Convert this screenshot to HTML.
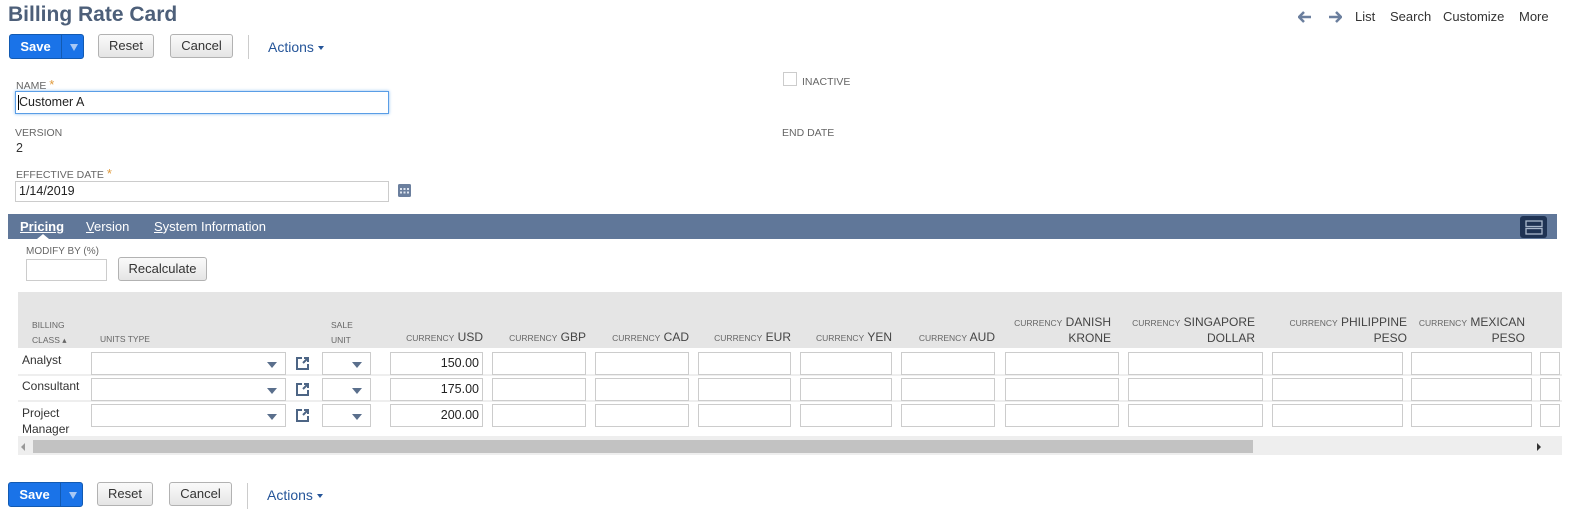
<!DOCTYPE html>
<html><head><meta charset="utf-8"><style>
*{box-sizing:border-box;margin:0;padding:0}
body{width:1583px;height:520px;background:#fff;font-family:"Liberation Sans",sans-serif;color:#333;position:relative;overflow:hidden;font-size:12px}
.a{position:absolute}
.lbl{position:absolute;font-size:10.5px;color:#666;text-transform:uppercase}
.star{color:#e09a3c;font-size:13px}
.btn{position:absolute;height:24px;border:1px solid #b2b2b2;border-radius:3px;background:linear-gradient(#fafafa,#e5e5e5);font-size:13px;color:#333;text-align:center;line-height:22px}
.save{position:absolute;height:25px;width:75px;border:1px solid #125ab2;border-radius:3px;background:#1a73e8;color:#fff;font-weight:bold;font-size:13px;line-height:23px}
.save span{position:absolute;left:0;width:51px;text-align:center}
.save i{position:absolute;left:51px;top:0;bottom:0;width:1px;background:#125ab2}
.save b{position:absolute;left:60px;top:9px;border-left:4px solid transparent;border-right:4px solid transparent;border-top:7px solid #a8c8f5}
.act{position:absolute;font-size:14px;color:#255599}
.act:after{content:"";display:inline-block;margin-left:4px;vertical-align:middle;border-left:3px solid transparent;border-right:3px solid transparent;border-top:4px solid #255599}
.inp{position:absolute;border:1px solid #ccc;background:#fff;height:23px}
.th{position:absolute;text-align:right;font-size:12px;color:#444;line-height:15px}
.th small{font-size:8.5px;color:#666}
.sel:after{content:"";position:absolute;right:8px;top:9px;border-left:5px solid transparent;border-right:5px solid transparent;border-top:6px solid #5a6f8c}
</style></head><body>
<div class="a" style="left:8px;top:3px;font-size:21px;font-weight:bold;color:#4d5f79">Billing Rate Card</div>
<svg class="a" style="left:1298px;top:11px" width="44" height="12"><path d="M1 6h12M6 1L1 6l5 5" stroke="#6b7f9e" stroke-width="2.5" fill="none"/><path d="M31 6h12M38 1l5 5-5 5" stroke="#6b7f9e" stroke-width="2.5" fill="none"/></svg>
<div class="a" style="left:1355px;top:9px;font-size:13px;color:#333">List</div>
<div class="a" style="left:1390px;top:9px;font-size:13px;color:#333">Search</div>
<div class="a" style="left:1443px;top:9px;font-size:13px;color:#333">Customize</div>
<div class="a" style="left:1519px;top:9px;font-size:13px;color:#333">More</div>

<div class="save" style="left:9px;top:34px"><span>Save</span><i></i><b></b></div>
<div class="btn" style="left:98px;top:34px;width:56px">Reset</div>
<div class="btn" style="left:170px;top:34px;width:63px">Cancel</div>
<div class="a" style="left:248px;top:35px;width:1px;height:24px;background:#ccc"></div>
<div class="act" style="left:268px;top:39px">Actions</div>

<div class="lbl" style="left:16px;top:77px">Name <span class="star">*</span></div>
<div class="inp" style="left:15px;top:91px;width:374px;border:1px solid #5a9ee6;box-shadow:0 0 3px #8bbcf0;font-size:12.5px;padding:3px 3px;color:#222">Customer A</div>
<div class="a" style="left:18px;top:95px;width:1px;height:15px;background:#000"></div>
<div class="a" style="left:783px;top:72px;width:14px;height:14px;border:1px solid #ccc"></div>
<div class="lbl" style="left:802px;top:76px">Inactive</div>
<div class="lbl" style="left:15px;top:127px">Version</div>
<div class="a" style="left:16px;top:141px;font-size:12.5px">2</div>
<div class="lbl" style="left:782px;top:127px">End Date</div>
<div class="lbl" style="left:16px;top:166px">Effective Date <span class="star">*</span></div>
<div class="inp" style="left:15px;top:181px;width:374px;height:21px;font-size:12.5px;padding:2px 3px;color:#222">1/14/2019</div>
<svg class="a" style="left:398px;top:184px" width="13" height="13"><rect x="0" y="0" width="13" height="13" rx="1.5" fill="#6b7f9e"/><g fill="#dfe6f0"><rect x="2" y="4" width="2" height="2"/><rect x="5.5" y="4" width="2" height="2"/><rect x="9" y="4" width="2" height="2"/><rect x="2" y="7.5" width="2" height="2"/><rect x="5.5" y="7.5" width="2" height="2"/><rect x="9" y="7.5" width="2" height="2"/></g></svg>

<div class="a" style="left:8px;top:214px;width:1549px;height:25px;background:#607799"></div>
<div class="a" style="left:20px;top:219px;font-size:13px;color:#fff;font-weight:bold;text-decoration:underline">Pricing</div>
<div class="a" style="left:37px;top:234px;border-left:6px solid transparent;border-right:6px solid transparent;border-bottom:5px solid #fff"></div>
<div class="a" style="left:86px;top:219px;font-size:13px;color:#fff"><u>V</u>ersion</div>
<div class="a" style="left:154px;top:219px;font-size:13px;color:#fff"><u>S</u>ystem Information</div>
<div class="a" style="left:1520px;top:216px;width:27px;height:22px;background:#1f3354;border-radius:3px"></div>
<svg class="a" style="left:1525px;top:220px" width="18" height="15"><rect x="1" y="1" width="16" height="5.5" fill="none" stroke="#aab8cc" stroke-width="1.3"/><rect x="1" y="8.5" width="16" height="5.5" fill="none" stroke="#aab8cc" stroke-width="1.3"/></svg>

<div class="lbl" style="left:26px;top:246px;font-size:10px">Modify by (%)</div>
<div class="inp" style="left:26px;top:259px;width:81px;height:22px"></div>
<div class="btn" style="left:118px;top:257px;width:89px">Recalculate</div>

<div class="a" style="left:18px;top:292px;width:1544px;height:56px;background:#e5e5e5"></div>
<div class="a" style="left:18px;top:348px;width:1544px;height:90px;background:#fff"></div>
<div class="a" style="left:18px;top:374px;width:1544px;height:2px;background:#eee"></div>
<div class="a" style="left:18px;top:400px;width:1544px;height:2px;background:#eee"></div>
<div class="a" style="left:18px;top:436px;width:1544px;height:2px;background:#eee"></div>
<div class="a" style="left:18px;top:438px;width:1544px;height:17px;background:#eee"></div>
<div class="a" style="left:33px;top:440px;width:1220px;height:13px;background:#c2c2c2"></div>
<div class="a" style="left:21px;top:443px;border-top:4px solid transparent;border-bottom:4px solid transparent;border-right:4px solid #999"></div>
<div class="a" style="left:1537px;top:443px;border-top:4px solid transparent;border-bottom:4px solid transparent;border-left:4px solid #333"></div>

<div class="th" style="left:32px;top:318px;text-align:left;font-size:8.5px;color:#666;line-height:15px">BILLING<br>CLASS ▴</div>
<div class="th" style="left:100px;top:332px;text-align:left;font-size:8.5px;color:#666">UNITS TYPE</div>
<div class="th" style="left:331px;top:318px;text-align:left;font-size:8.5px;color:#666">SALE<br>UNIT</div>
<div class="th" style="right:1100px;top:330px"><small>CURRENCY</small> USD</div>
<div class="th" style="right:997px;top:330px"><small>CURRENCY</small> GBP</div>
<div class="th" style="right:894px;top:330px"><small>CURRENCY</small> CAD</div>
<div class="th" style="right:792px;top:330px"><small>CURRENCY</small> EUR</div>
<div class="th" style="right:691px;top:330px"><small>CURRENCY</small> YEN</div>
<div class="th" style="right:588px;top:330px"><small>CURRENCY</small> AUD</div>
<div class="th" style="right:472px;top:315px"><small>CURRENCY</small> DANISH<br>KRONE</div>
<div class="th" style="right:328px;top:315px"><small>CURRENCY</small> SINGAPORE<br>DOLLAR</div>
<div class="th" style="right:176px;top:315px"><small>CURRENCY</small> PHILIPPINE<br>PESO</div>
<div class="th" style="right:58px;top:315px"><small>CURRENCY</small> MEXICAN<br>PESO</div>

<div class="a" style="left:22px;top:353px;font-size:12px">Analyst</div>
<div class="a" style="left:22px;top:379px;font-size:12px">Consultant</div>
<div class="a" style="left:22px;top:405px;font-size:12px;line-height:16px">Project<br>Manager</div>

<div id="rows"></div>
<script>
var ys=[352,378,404],vals=["150.00","175.00","200.00"];
var cols=[[390,93],[492,94],[595,94],[698,93],[800,92],[901,94],[1005,114],[1128,135],[1272,131],[1411,121],[1540,20]];
var h="";
ys.forEach(function(y,i){
h+='<div class="inp sel" style="left:91px;top:'+y+'px;width:195px"></div>';
h+='<svg class="a" style="left:295px;top:'+(y+4)+'px" width="15" height="15"><path d="M7 2H2v11h11V8" stroke="#4d6585" stroke-width="2" fill="none"/><path d="M8 7l5-5M9 2h4v4" stroke="#4d6585" stroke-width="2" fill="none"/></svg>';
h+='<div class="inp sel" style="left:322px;top:'+y+'px;width:49px"></div>';
cols.forEach(function(c,j){h+='<div class="inp" style="left:'+c[0]+'px;top:'+y+'px;width:'+c[1]+'px;text-align:right;padding:3px 3px;font-size:12.5px;color:#222">'+(j==0?vals[i]:'')+'</div>';});
});
h+='<div class="a" style="left:1562px;top:292px;width:21px;height:165px;background:#fff"></div>';
document.getElementById('rows').innerHTML=h;
</script>

<div class="save" style="left:8px;top:482px"><span>Save</span><i></i><b></b></div>
<div class="btn" style="left:97px;top:482px;width:56px">Reset</div>
<div class="btn" style="left:169px;top:482px;width:63px">Cancel</div>
<div class="a" style="left:247px;top:483px;width:1px;height:26px;background:#ccc"></div>
<div class="act" style="left:267px;top:487px">Actions</div>
</body></html>
